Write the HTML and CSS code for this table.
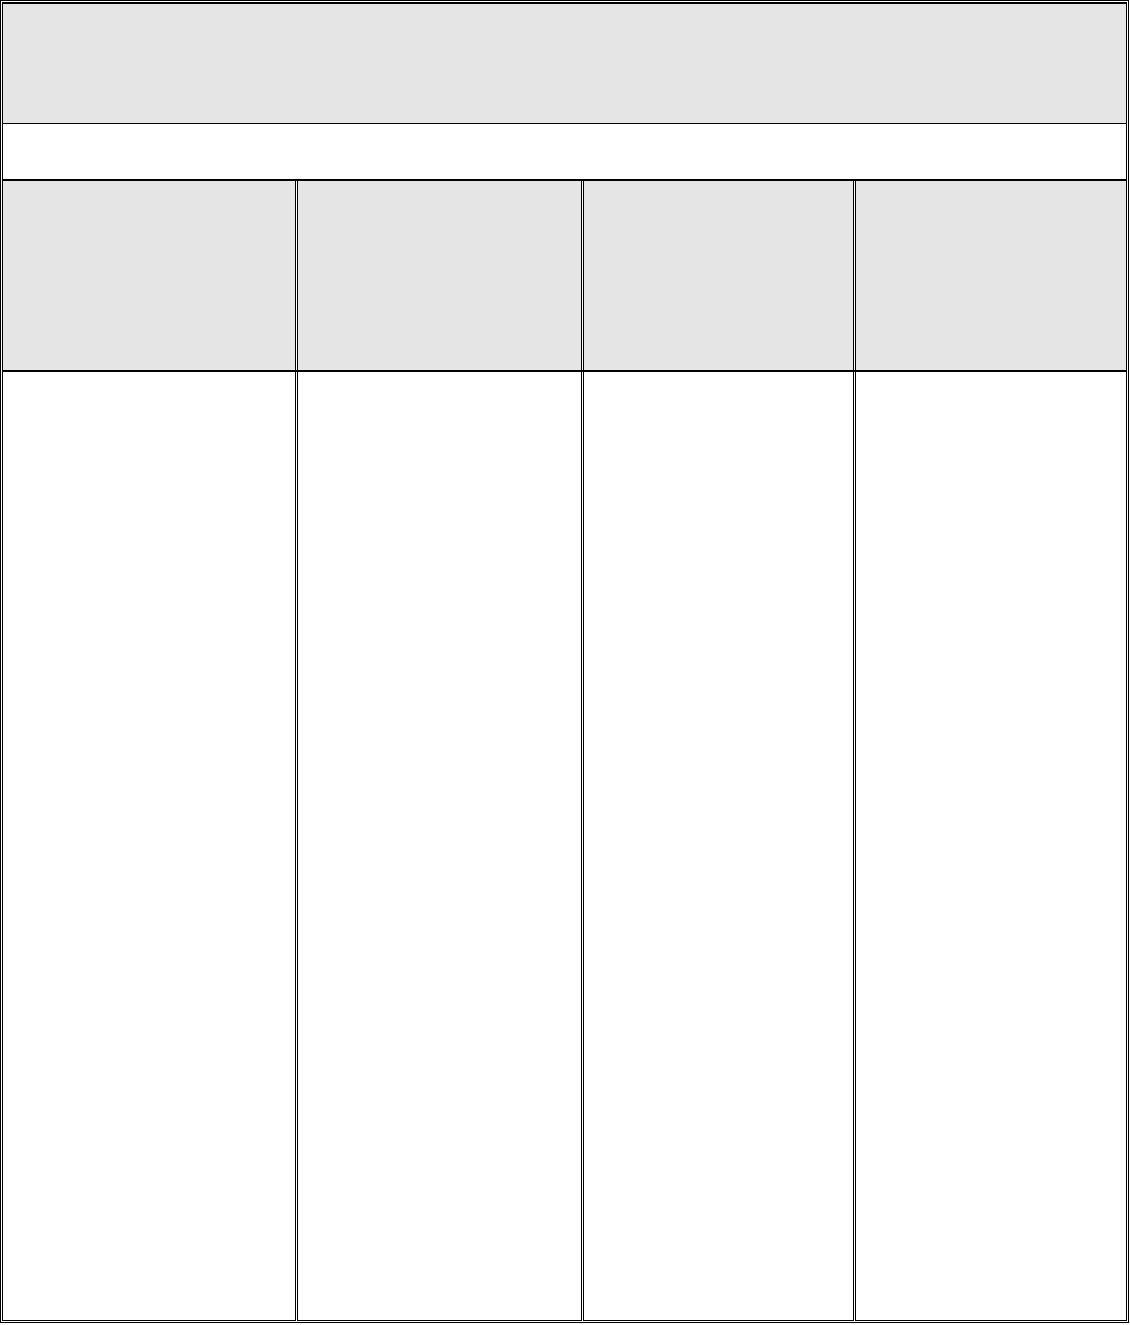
FILE: index.html
```html
<!DOCTYPE html>
<html lang="en">
<head>
<meta charset="utf-8">
<title>Form</title>
<link rel="stylesheet" href="styles.css">
</head>
<body>
  <div class="sheet">
    <div class="title-row"></div>
    <div class="subtitle-row"></div>
    <div class="head-row">
      <div class="head-cell"></div>
      <div class="head-cell"></div>
      <div class="head-cell"></div>
      <div class="head-cell"></div>
    </div>
    <div class="body-row">
      <div class="body-cell"></div>
      <div class="body-cell"></div>
      <div class="body-cell"></div>
      <div class="body-cell"></div>
    </div>
  </div>
</body>
</html>
```
FILE: styles.css
```css
html, body {
  margin: 0;
  padding: 0;
  background: #ffffff;
  font-family: "Liberation Serif", "Times New Roman", serif;
}

.sheet {
  box-sizing: border-box;
  width: 1129px;
  border: 1px solid #000;
  padding: 1px;
  background: #fff;
  display: flex;
  flex-direction: column;
}

.title-row {
  box-sizing: border-box;
  height: 122px;
  background: #e5e5e5;
  border: 1px solid #000;
  border-top-width: 2px;
}

.subtitle-row {
  box-sizing: border-box;
  height: 57px;
  background: #fff;
  border-left: 1px solid #000;
  border-right: 1px solid #000;
  border-bottom: 2px solid #000;
}

.head-row,
.body-row {
  display: grid;
  grid-template-columns: 294px 285px 271px 272px;
  column-gap: 1px;
}

.head-row {
  box-sizing: border-box;
  height: 191px;
  border-bottom: 2px solid #000;
}

.head-cell {
  box-sizing: border-box;
  background: #e5e5e5;
  border-left: 1px solid #000;
  border-right: 1px solid #000;
}

.body-row {
  height: 949px;
}

.body-cell {
  box-sizing: border-box;
  background: #fff;
  border-left: 1px solid #000;
  border-right: 1px solid #000;
  border-bottom: 1px solid #000;
}
```
